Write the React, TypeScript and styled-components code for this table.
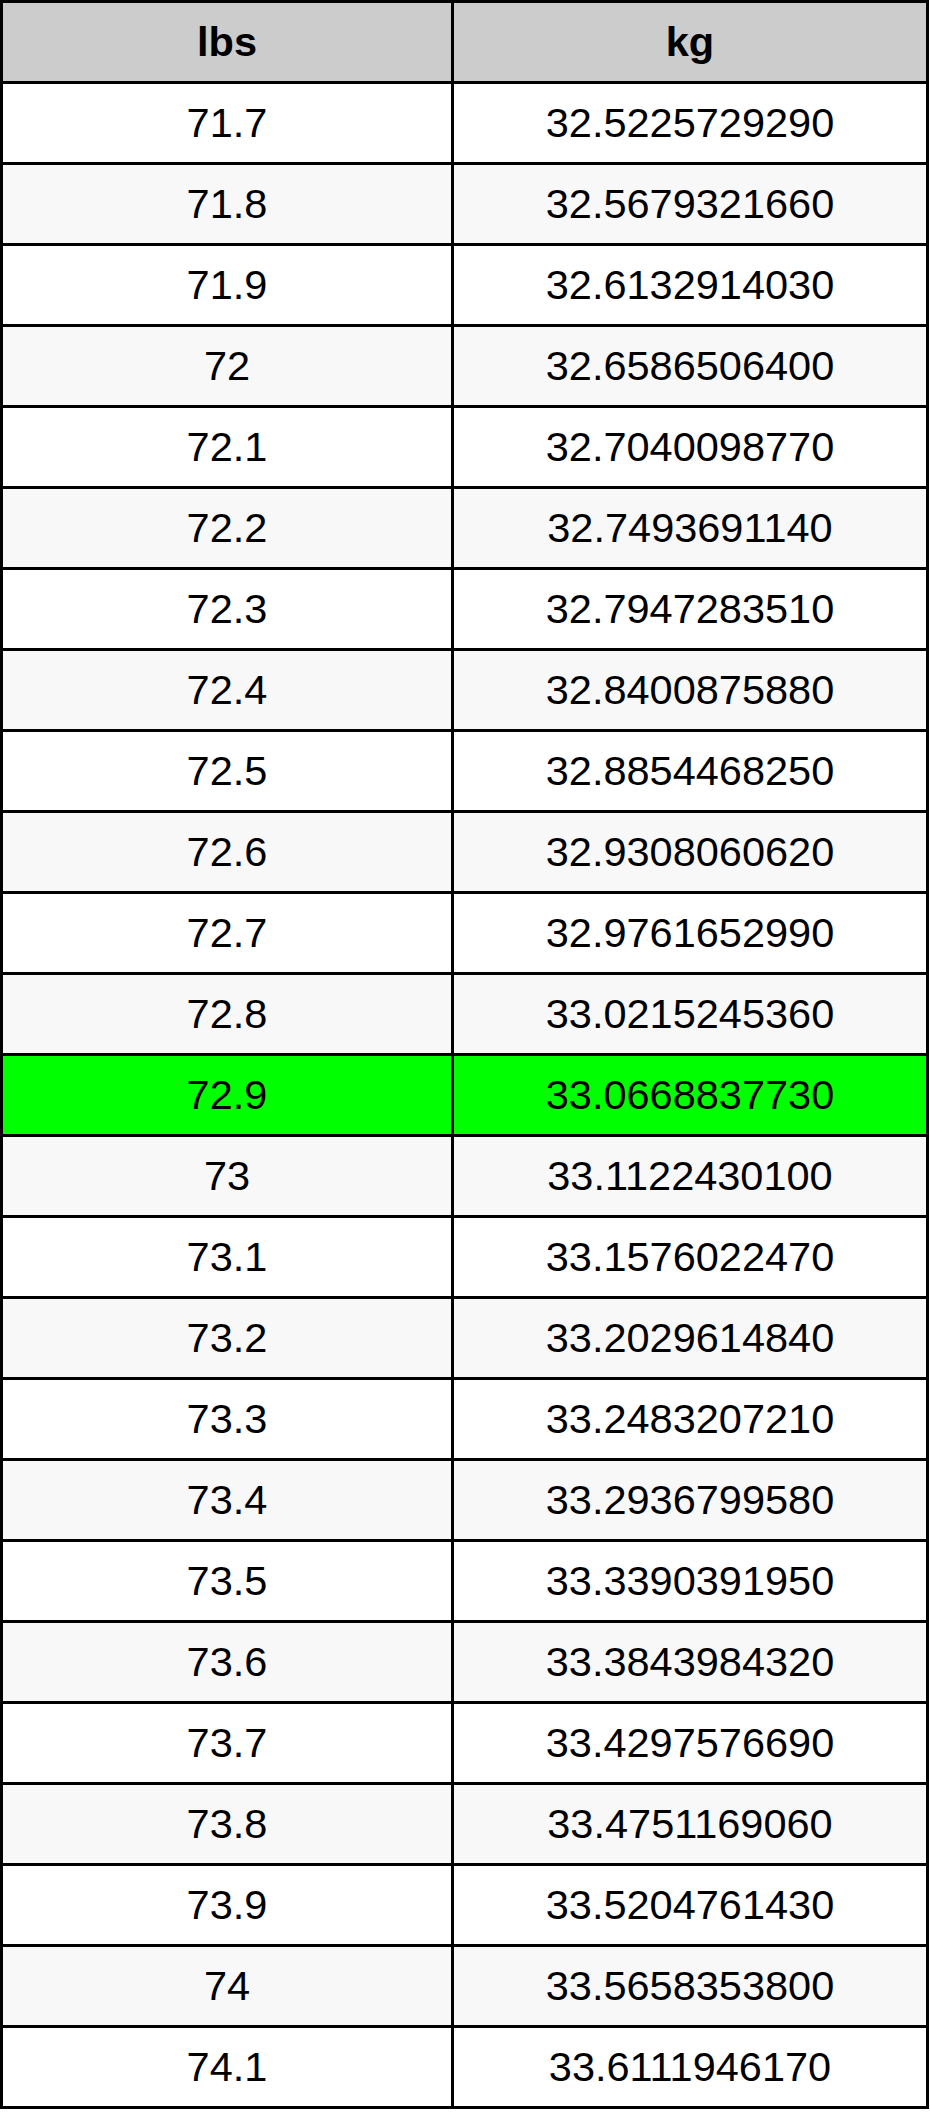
import styled, { createGlobalStyle } from 'styled-components';

type Row = {
	lbs: string;
	kg: string;
};

const rows: Row[] = [
	{ lbs: '71.7', kg: '32.5225729290' },
	{ lbs: '71.8', kg: '32.5679321660' },
	{ lbs: '71.9', kg: '32.6132914030' },
	{ lbs: '72', kg: '32.6586506400' },
	{ lbs: '72.1', kg: '32.7040098770' },
	{ lbs: '72.2', kg: '32.7493691140' },
	{ lbs: '72.3', kg: '32.7947283510' },
	{ lbs: '72.4', kg: '32.8400875880' },
	{ lbs: '72.5', kg: '32.8854468250' },
	{ lbs: '72.6', kg: '32.9308060620' },
	{ lbs: '72.7', kg: '32.9761652990' },
	{ lbs: '72.8', kg: '33.0215245360' },
	{ lbs: '72.9', kg: '33.0668837730' },
	{ lbs: '73', kg: '33.1122430100' },
	{ lbs: '73.1', kg: '33.1576022470' },
	{ lbs: '73.2', kg: '33.2029614840' },
	{ lbs: '73.3', kg: '33.2483207210' },
	{ lbs: '73.4', kg: '33.2936799580' },
	{ lbs: '73.5', kg: '33.3390391950' },
	{ lbs: '73.6', kg: '33.3843984320' },
	{ lbs: '73.7', kg: '33.4297576690' },
	{ lbs: '73.8', kg: '33.4751169060' },
	{ lbs: '73.9', kg: '33.5204761430' },
	{ lbs: '74', kg: '33.5658353800' },
	{ lbs: '74.1', kg: '33.6111946170' },
];

const highlighted = '72.9';

const GlobalStyle = createGlobalStyle`
	body {
		margin: 0;
		background: #fff;
		font-family: "Liberation Sans", Arial, Helvetica, sans-serif;
	}
`;

const Table = styled.table`
	width: 929px;
	border-collapse: separate;
	border-spacing: 3px;
	background-color: #000;
	table-layout: fixed;
`;

const HeadCell = styled.th<{ $width: number }>`
	box-sizing: border-box;
	width: ${(p) => p.$width}px;
	height: 78px;
	padding: 0;
	background-color: #cccccc;
	color: #000;
	font-size: 41.5px;
	line-height: 1;
	font-weight: bold;
	text-align: center;
	vertical-align: middle;
`;

const Cell = styled.td<{ $tone: 'white' | 'gray' | 'green' }>`
	box-sizing: border-box;
	height: 78px;
	padding: 0;
	background-color: ${(p) =>
		p.$tone === 'green' ? '#00ff00' : p.$tone === 'gray' ? '#f8f8f8' : '#ffffff'};
	color: #000;
	font-size: 41.5px;
	line-height: 1;
	text-align: center;
	vertical-align: middle;
`;

export default function App() {
	return (
		<>
			<GlobalStyle />
			<Table>
				<thead>
					<tr>
						<HeadCell $width={448}>lbs</HeadCell>
						<HeadCell $width={472}>kg</HeadCell>
					</tr>
				</thead>
				<tbody>
					{rows.map((row, i) => {
						const tone = row.lbs === highlighted ? 'green' : i % 2 === 1 ? 'gray' : 'white';
						return (
							<tr key={row.lbs}>
								<Cell $tone={tone}>{row.lbs}</Cell>
								<Cell $tone={tone}>{row.kg}</Cell>
							</tr>
						);
					})}
				</tbody>
			</Table>
		</>
	);
}
